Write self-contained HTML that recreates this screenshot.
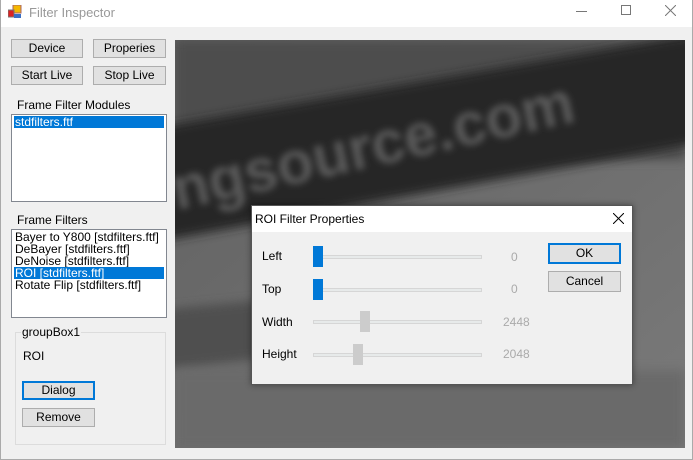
<!DOCTYPE html>
<html><head><meta charset="utf-8"><style>
*{margin:0;padding:0;box-sizing:border-box}
body{width:693px;height:460px;background:#f0f0f0;font-family:"Liberation Sans",sans-serif;font-size:12px;color:#000;position:relative;overflow:hidden}
.a{position:absolute}
.win{left:0;top:0;width:693px;height:460px;border:1px solid #aaa;border-top:none}
.tb{left:0;top:0;width:693px;height:27px;background:#fff}
.btn{position:absolute;background:#e1e1e1;border:1px solid #adadad;text-align:center;line-height:16px;font-size:12px}
.list{position:absolute;background:#fff;border:1px solid #828790}
.it{position:absolute;left:2px;height:12px;line-height:12px;font-size:12px;white-space:nowrap;padding-left:1px}
.sel{background:#0078d7;color:#fff}
.track{position:absolute;height:4px;background:#e7eaea;border:1px solid #d6d6d6}
.thumb{position:absolute;width:10px;height:21px}
</style></head><body>
<div class="a tb"></div>
<svg class="a" style="left:8px;top:5px" width="14" height="14" viewBox="0 0 14 14"><rect x="5" y="0" width="8" height="8" fill="#f5b800" stroke="#a66"/><rect x="0" y="5" width="6" height="7" fill="#d22" stroke="#777"/><rect x="6" y="9" width="7" height="4" fill="#3a6fc4"/></svg>
<div class="a" style="left:29px;top:5px;font-size:13px;color:#999">Filter Inspector</div>
<div class="a" style="left:576px;top:11px;width:11px;height:1px;background:#777"></div>
<div class="a" style="left:621px;top:5px;width:10px;height:10px;border:1px solid #777"></div>
<svg class="a" style="left:665px;top:5px" width="11" height="11"><path d="M0 0L11 11M11 0L0 11" stroke="#777" stroke-width="1"/></svg>
<div class="a win"></div>

<div class="btn" style="left:11px;top:39px;width:72px;height:19px">Device</div>
<div class="btn" style="left:93px;top:39px;width:73px;height:19px">Properies</div>
<div class="btn" style="left:11px;top:66px;width:72px;height:19px">Start Live</div>
<div class="btn" style="left:93px;top:66px;width:73px;height:19px">Stop Live</div>
<div class="a" style="left:17px;top:98px">Frame Filter Modules</div>
<div class="list" style="left:11px;top:114px;width:156px;height:88px"><div class="it sel" style="top:1px;width:150px">stdfilters.ftf</div></div>
<div class="a" style="left:17px;top:213px">Frame Filters</div>
<div class="list" style="left:11px;top:229px;width:156px;height:89px">
<div class="it" style="top:1px">Bayer to Y800 [stdfilters.ftf]</div>
<div class="it" style="top:13px">DeBayer [stdfilters.ftf]</div>
<div class="it" style="top:25px">DeNoise [stdfilters.ftf]</div>
<div class="it sel" style="top:37px;width:150px">ROI [stdfilters.ftf]</div>
<div class="it" style="top:49px">Rotate Flip [stdfilters.ftf]</div>
</div>
<div class="a" style="left:15px;top:332px;width:151px;height:113px;border:1px solid #dcdcdc"></div>
<div class="a" style="left:21px;top:325px;background:#f0f0f0;padding:0 1px">groupBox1</div>
<div class="a" style="left:23px;top:349px">ROI</div>
<div class="btn" style="left:22px;top:381px;width:73px;height:19px;border:2px solid #0078d7;line-height:15px">Dialog</div>
<div class="btn" style="left:22px;top:408px;width:73px;height:19px">Remove</div>

<svg class="a" style="left:175px;top:40px" width="510" height="408" viewBox="0 0 510 408">
<defs><filter id="b" x="-20%" y="-20%" width="140%" height="140%"><feGaussianBlur stdDeviation="5"/></filter>
<filter id="b2"><feGaussianBlur stdDeviation="3.5"/></filter>
<linearGradient id="g" x1="0" y1="0" x2="1" y2="1"><stop offset="0" stop-color="#606060"/><stop offset="1" stop-color="#7a7a7a"/></linearGradient></defs>
<rect width="510" height="408" fill="url(#g)"/>
<rect width="510" height="120" fill="#4e4e4e" filter="url(#b)"/>
<polygon points="-20,88 530,-8 530,102 -20,202" fill="#262626" filter="url(#b)"/>
<polygon points="-20,270 200,250 260,300 -20,330" fill="#505050" filter="url(#b)"/>
<rect x="0" y="330" width="510" height="78" fill="#6a6a6a" filter="url(#b)"/>
<text x="2" y="170" transform="rotate(-12.5 2 170)" font-family="Liberation Sans" font-weight="bold" font-size="60" fill="#5a5a5a" filter="url(#b2)">ngsource.com</text>
</svg>

<div class="a" style="left:251px;top:205px;width:382px;height:180px;background:#f0f0f0;border:1px solid #555;box-shadow:0 0 6px rgba(0,0,0,.4)">
<div class="a" style="left:0;top:0;width:380px;height:26px;background:#fff"></div>
<div class="a" style="left:3px;top:6px;font-size:12px">ROI Filter Properties</div>
<svg class="a" style="left:361px;top:7px" width="11" height="11"><path d="M0 0L11 11M11 0L0 11" stroke="#000" stroke-width="1"/></svg>
<div class="a" style="left:10px;top:43px">Left</div>
<div class="a" style="left:10px;top:76px">Top</div>
<div class="a" style="left:10px;top:109px">Width</div>
<div class="a" style="left:10px;top:141px">Height</div>
<div class="track" style="left:61px;top:49px;width:169px"></div>
<div class="track" style="left:61px;top:82px;width:169px"></div>
<div class="track" style="left:61px;top:114px;width:169px"></div>
<div class="track" style="left:61px;top:147px;width:169px"></div>
<div class="thumb" style="left:61px;top:40px;background:#0078d7"></div>
<div class="thumb" style="left:61px;top:73px;background:#0078d7"></div>
<div class="thumb" style="left:108px;top:105px;background:#ccc"></div>
<div class="thumb" style="left:101px;top:138px;background:#ccc"></div>
<div class="a" style="left:259px;top:44px;color:#aaa">0</div>
<div class="a" style="left:259px;top:76px;color:#aaa">0</div>
<div class="a" style="left:251px;top:109px;color:#aaa">2448</div>
<div class="a" style="left:251px;top:141px;color:#aaa">2048</div>
<div class="btn" style="left:296px;top:37px;width:73px;height:21px;border:2px solid #0078d7;line-height:17px">OK</div>
<div class="btn" style="left:296px;top:65px;width:73px;height:21px;line-height:19px">Cancel</div>
</div>
</body></html>
